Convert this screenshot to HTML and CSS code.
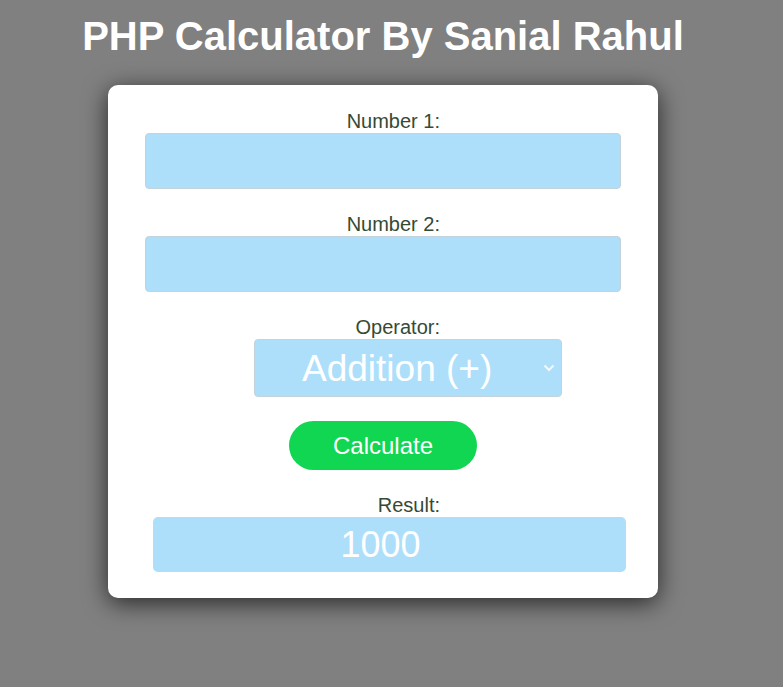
FILE: index.html
```html
<!DOCTYPE html>
<html lang="en">
<head>
    <meta charset="UTF-8">
    <meta name="viewport" content="width=device-width, initial-scale=1.0">
    <title>PHP Calculator</title>
    <link rel="stylesheet" href="styles.css">
</head>
<body>
    <h1>PHP Calculator By Sanial Rahul</h1>

    <div class="calc-box">
        <form method="post">
            <label for="num1">Number 1:</label>
            <input type="number" id="num1" name="num1" class="num-input">

            <label for="num2">Number 2:</label>
            <input type="number" id="num2" name="num2" class="num-input">

            <label for="operator">Operator:</label>
            <div class="select-wrap">
                <select id="operator" name="operator" class="op-select">
                    <option value="add">Addition (+)</option>
                    <option value="sub">Subtraction (-)</option>
                    <option value="mul">Multiplication (*)</option>
                    <option value="div">Division (/)</option>
                </select>
                <svg class="chevron" width="12" height="8" viewBox="0 0 12 8">
                    <path d="M1.5 1.5 L6 6 L10.5 1.5" fill="none" stroke="#f2f8fc" stroke-width="2"/>
                </svg>
            </div>

            <button type="submit" class="btn">Calculate</button>

            <label class="result-label">Result:</label>
            <div class="result">1000</div>
        </form>
    </div>
</body>
</html>
```

FILE: styles.css
```css
body {
    margin: 0;
    padding: 0 17px 80px 0;
    background-color: #808080;
    font-family: "Liberation Sans", Arial, sans-serif;
}
h1 {
    margin: 13px 0 26px;
    text-align: center;
    color: #fff;
    font-size: 40px;
    line-height: 46px;
}
.calc-box {
    width: 550px;
    box-sizing: border-box;
    margin: 0 auto;
    padding: 23px 0 26px;
    background-color: #fff;
    border-radius: 10px;
    box-shadow: 0 5px 24px rgba(0, 0, 0, 0.7);
}
label {
    display: block;
    width: 332px;
    padding-top: 2px;
    text-align: right;
    font-size: 20px;
    line-height: 23px;
    color: #354a35;
}
.num-input {
    display: block;
    width: 476px;
    height: 56px;
    box-sizing: border-box;
    margin: 0 auto 22px;
    border: 1px solid #c3d3dc;
    border-radius: 4px;
    background-color: #addffb;
    font-size: 20px;
}
.select-wrap {
    position: relative;
    width: 308px;
    margin: 0 0 24px 146px;
}
.op-select {
    display: block;
    width: 308px;
    height: 58px;
    box-sizing: border-box;
    padding-left: 47px;
    border: 1px solid #c3d3dc;
    border-radius: 4px;
    background-color: #addffb;
    color: #fff;
    font-family: "Liberation Sans", Arial, sans-serif;
    font-size: 37px;
    appearance: none;
    -webkit-appearance: none;
}
.chevron {
    position: absolute;
    right: 7px;
    top: 25px;
}
.btn {
    display: block;
    width: 188px;
    height: 49px;
    margin: 0 auto 22px;
    border: none;
    border-radius: 25px;
    background-color: #11d652;
    color: #fff;
    font-family: "Liberation Sans", Arial, sans-serif;
    font-size: 24px;
    cursor: pointer;
}
.result {
    width: 473px;
    height: 55px;
    box-sizing: border-box;
    margin-left: 45px;
    padding-right: 18px;
    border-radius: 5px;
    background-color: #addffb;
    color: #fff;
    text-align: center;
    font-size: 36px;
    line-height: 55px;
}
```
